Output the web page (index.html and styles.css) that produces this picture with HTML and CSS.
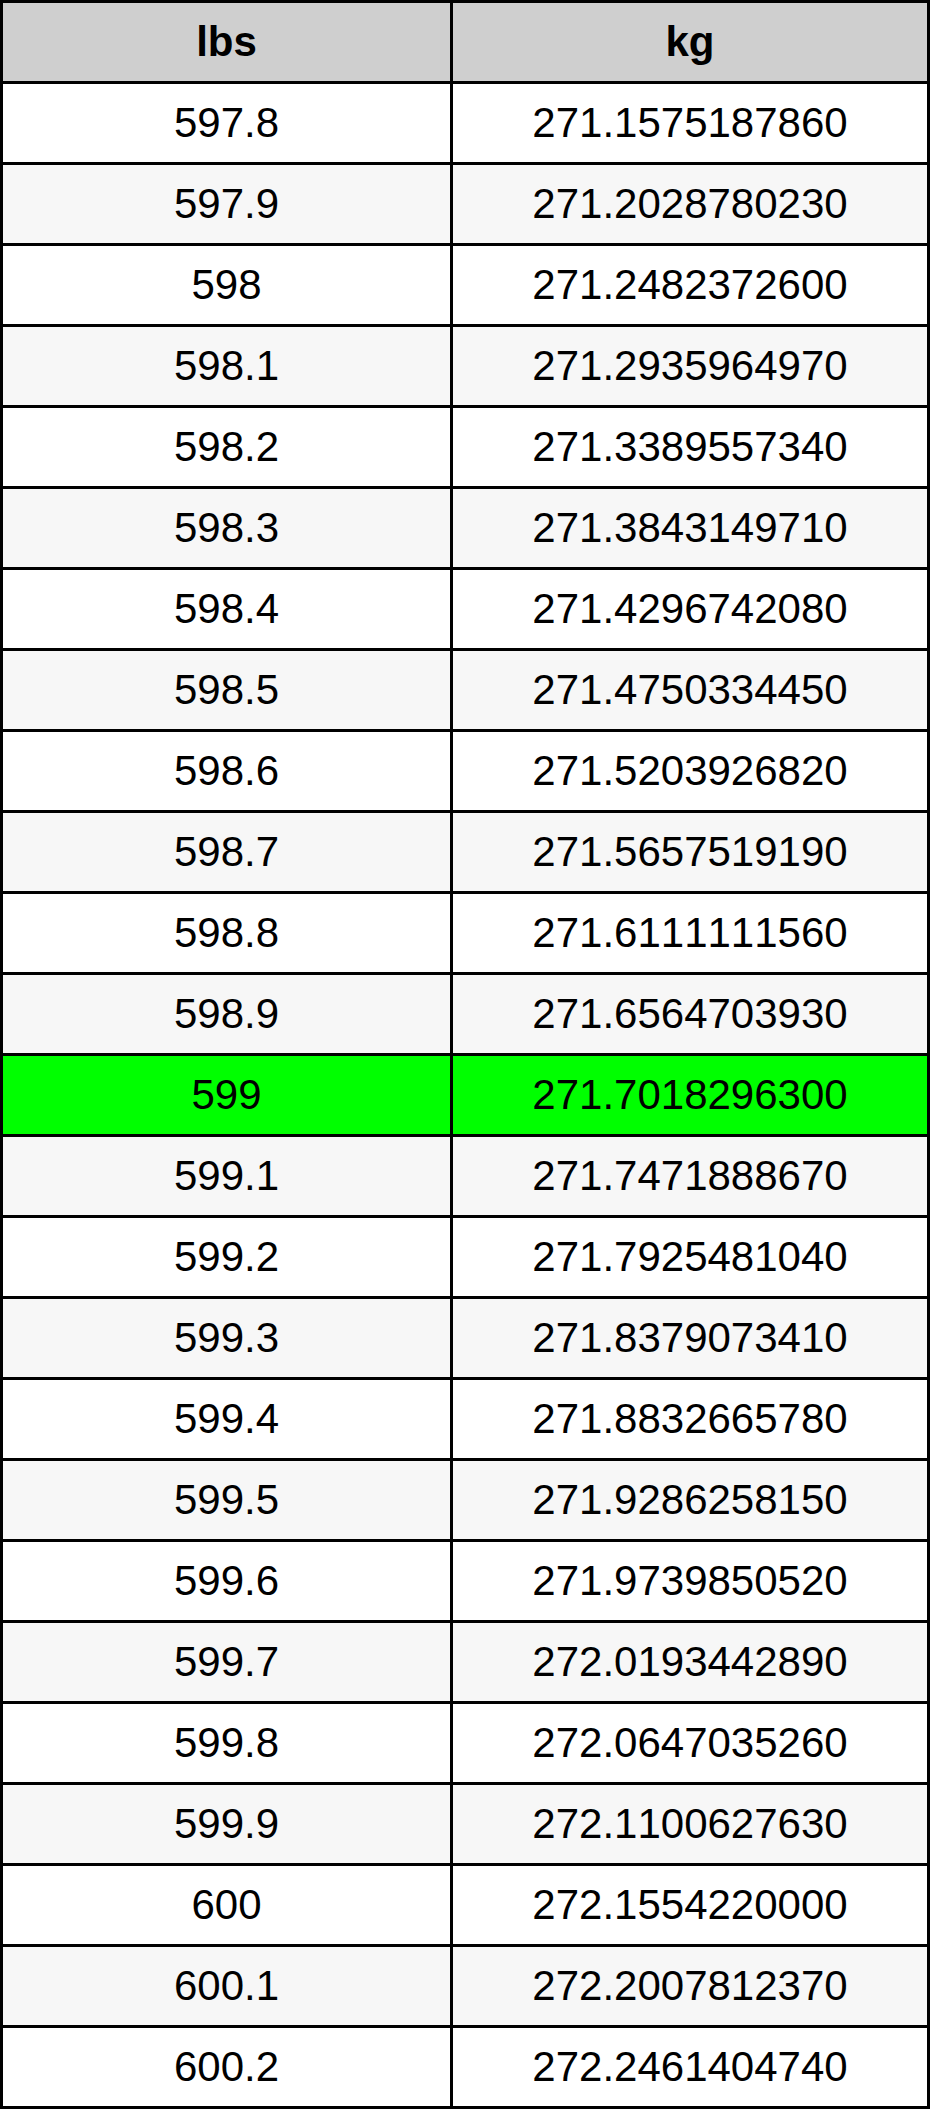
FILE: index.html
```html
<!DOCTYPE html>
<html>
<head>
<meta charset="utf-8">
<link rel="stylesheet" href="styles.css">
</head>
<body>
<table class="conv">
<thead>
<tr><th class="c-lbs">lbs</th><th class="c-kg">kg</th></tr>
</thead>
<tbody>
<tr><td>597.8</td><td>271.1575187860</td></tr>
<tr><td>597.9</td><td>271.2028780230</td></tr>
<tr><td>598</td><td>271.2482372600</td></tr>
<tr><td>598.1</td><td>271.2935964970</td></tr>
<tr><td>598.2</td><td>271.3389557340</td></tr>
<tr><td>598.3</td><td>271.3843149710</td></tr>
<tr><td>598.4</td><td>271.4296742080</td></tr>
<tr><td>598.5</td><td>271.4750334450</td></tr>
<tr><td>598.6</td><td>271.5203926820</td></tr>
<tr><td>598.7</td><td>271.5657519190</td></tr>
<tr><td>598.8</td><td>271.6111111560</td></tr>
<tr><td>598.9</td><td>271.6564703930</td></tr>
<tr class="hl"><td>599</td><td>271.7018296300</td></tr>
<tr><td>599.1</td><td>271.7471888670</td></tr>
<tr><td>599.2</td><td>271.7925481040</td></tr>
<tr><td>599.3</td><td>271.8379073410</td></tr>
<tr><td>599.4</td><td>271.8832665780</td></tr>
<tr><td>599.5</td><td>271.9286258150</td></tr>
<tr><td>599.6</td><td>271.9739850520</td></tr>
<tr><td>599.7</td><td>272.0193442890</td></tr>
<tr><td>599.8</td><td>272.0647035260</td></tr>
<tr><td>599.9</td><td>272.1100627630</td></tr>
<tr><td>600</td><td>272.1554220000</td></tr>
<tr><td>600.1</td><td>272.2007812370</td></tr>
<tr><td>600.2</td><td>272.2461404740</td></tr>
</tbody>
</table>
</body>
</html>
```
FILE: styles.css
```css
html, body {
  margin: 0;
  padding: 0;
  background: #ffffff;
}

.conv {
  width: 930px;
  table-layout: fixed;
  border-collapse: separate;
  border-spacing: 3px;
  background: #000000;
  font-family: "Liberation Sans", Arial, sans-serif;
  font-size: 42px;
  font-kerning: none;
  font-variant-numeric: tabular-nums;
  color: #000000;
}

.conv th,
.conv td {
  height: 78px;
  padding: 0;
  text-align: center;
  vertical-align: middle;
  line-height: 1;
}

.conv th {
  background: #cfcfcf;
  font-weight: bold;
}

.c-lbs {
  width: 447px;
}

.c-kg {
  width: 474px;
}

.conv tbody tr td {
  background: #ffffff;
}

.conv tbody tr:nth-child(even) td {
  background: #f7f7f7;
}

.conv tbody tr.hl td {
  background: #00ff00;
}
```
